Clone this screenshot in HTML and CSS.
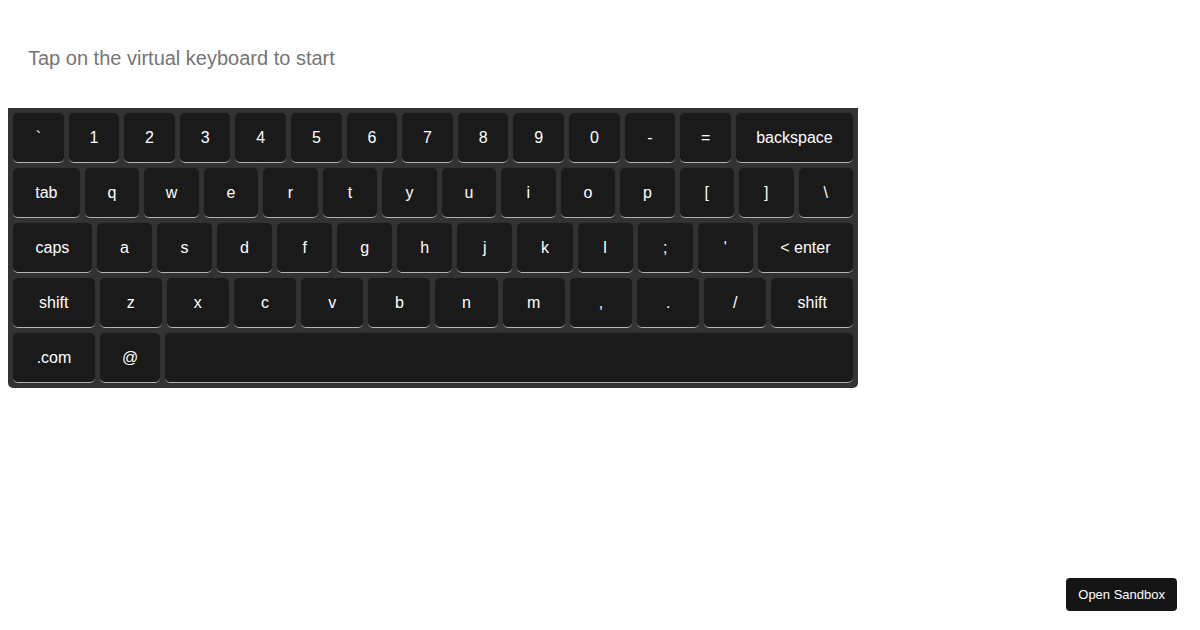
FILE: index.html
```html
<!DOCTYPE html>
<html>
<head>
<meta charset="utf-8">
<link rel="stylesheet" href="styles.css">
</head>
<body>
<div class="input">Tap on the virtual keyboard to start</div>
<div class="keyboard">
  <div class="row">
    <div class="btn std">`</div><div class="btn std">1</div><div class="btn std">2</div><div class="btn std">3</div><div class="btn std">4</div><div class="btn std">5</div><div class="btn std">6</div><div class="btn std">7</div><div class="btn std">8</div><div class="btn std">9</div><div class="btn std">0</div><div class="btn std">-</div><div class="btn std">=</div><div class="btn fn">backspace</div>
  </div>
  <div class="row">
    <div class="btn fn">tab</div><div class="btn std">q</div><div class="btn std">w</div><div class="btn std">e</div><div class="btn std">r</div><div class="btn std">t</div><div class="btn std">y</div><div class="btn std">u</div><div class="btn std">i</div><div class="btn std">o</div><div class="btn std">p</div><div class="btn std">[</div><div class="btn std">]</div><div class="btn std">\</div>
  </div>
  <div class="row">
    <div class="btn fn">caps</div><div class="btn std">a</div><div class="btn std">s</div><div class="btn std">d</div><div class="btn std">f</div><div class="btn std">g</div><div class="btn std">h</div><div class="btn std">j</div><div class="btn std">k</div><div class="btn std">l</div><div class="btn std">;</div><div class="btn std">'</div><div class="btn fn">&lt; enter</div>
  </div>
  <div class="row">
    <div class="btn fn">shift</div><div class="btn std">z</div><div class="btn std">x</div><div class="btn std">c</div><div class="btn std">v</div><div class="btn std">b</div><div class="btn std">n</div><div class="btn std">m</div><div class="btn std">,</div><div class="btn std">.</div><div class="btn std">/</div><div class="btn fn">shift</div>
  </div>
  <div class="row">
    <div class="btn std dotcom">.com</div><div class="btn std at">@</div><div class="btn fn space"></div>
  </div>
</div>
<div class="sandbox">Open Sandbox</div>
</body>
</html>
```
FILE: styles.css
```css
body {
  margin: 8px;
  background: #fff;
  font-family: "Liberation Sans", Arial, sans-serif;
}
.input {
  box-sizing: border-box;
  width: 100%;
  height: 100px;
  padding: 0 20px;
  display: flex;
  align-items: center;
  font-size: 20px;
  color: #757575;
}
.keyboard {
  box-sizing: border-box;
  max-width: 850px;
  padding: 5px;
  background: #333;
  border-radius: 0 0 5px 5px;
  overflow: hidden;
  display: flex;
  flex-direction: column;
  gap: 5px;
  font-family: "Liberation Sans", Arial, sans-serif;
  font-size: 16px;
}
.row {
  display: flex;
  gap: 5px;
}
.btn {
  box-sizing: border-box;
  height: 50px;
  padding: 5px;
  display: flex;
  align-items: center;
  justify-content: center;
  flex-grow: 1;
  background: #1a1a1a;
  color: #fff;
  border-bottom: 1px solid #b5b5b5;
  border-radius: 5px;
  box-shadow: 0 0 3px -1px rgba(0, 0, 0, 0.3);
  white-space: nowrap;
}
.std {
  width: 20px;
}
.dotcom {
  max-width: 82px;
}
.at {
  max-width: 60px;
}
.space {
  width: 350px;
}
.sandbox {
  position: fixed;
  right: 23px;
  bottom: 19px;
  box-sizing: border-box;
  height: 33px;
  padding: 0 12px;
  display: flex;
  align-items: center;
  background: #151515;
  color: #fff;
  border-radius: 4px;
  font-family: "Liberation Sans", Arial, sans-serif;
  font-size: 13px;
}
```
